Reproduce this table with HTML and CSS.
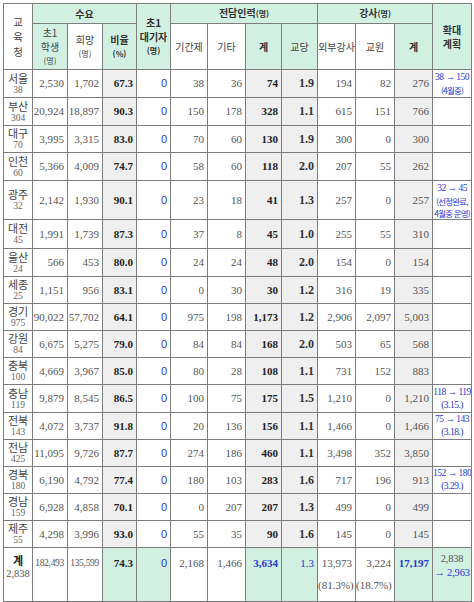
FILE: index.html
```html
<!DOCTYPE html>
<html lang="ko">
<head>
<meta charset="utf-8">
<link rel="stylesheet" href="styles.css">
</head>
<body>
<table class="t">
<colgroup>
<col class="w29"><col class="w35"><col class="w35"><col class="w34"><col class="w34"><col class="w37"><col class="w38"><col class="w36"><col class="w36"><col class="w38"><col class="w39"><col class="w38"><col class="w39">
</colgroup>
<thead>
<tr class="h1">
<th rowspan="2" class="wh region-h"><span class="ln">교</span><span class="ln">육</span><span class="ln">청</span></th>
<th colspan="3" class="gr b">수요</th>
<th rowspan="2" class="gr b"><span class="ln">초1</span><span class="ln">대기자</span><span class="ln u">(명)</span></th>
<th colspan="4" class="gr b">전담인력<span class="u">(명)</span></th>
<th colspan="3" class="gr b">강사<span class="u">(명)</span></th>
<th rowspan="2" class="gr b"><span class="ln">확대</span><span class="ln">계획</span></th>
</tr>
<tr class="h2">
<th class="gr"><span class="ln">초1</span><span class="ln">학생</span><span class="ln u">(명)</span></th>
<th class="wh"><span class="ln">희망</span><span class="ln u">(명)</span></th>
<th class="gr b"><span class="ln">비율</span><span class="ln u">(%)</span></th>
<th class="wh">기간제</th>
<th class="wh">기타</th>
<th class="gr b">계</th>
<th class="gr">교당</th>
<th class="wh">외부강사</th>
<th class="wh">교원</th>
<th class="gr b">계</th>
</tr>
</thead>
<tbody>
<tr class="r28"><td class="rg"><span class="rk">서울</span><span class="rn">38</span></td><td>2,530</td><td>1,702</td><td class="gy bd">67.3</td><td class="z">0</td><td>38</td><td>36</td><td class="gy bd">74</td><td class="gy bd2">1.9</td><td>194</td><td>82</td><td class="gy">276</td><td class="plan"><span class="pl">38 → 150</span><span class="pl k">(4월중)</span></td></tr>
<tr class="r28"><td class="rg"><span class="rk">부산</span><span class="rn">304</span></td><td>20,924</td><td>18,897</td><td class="gy bd">90.3</td><td class="z">0</td><td>150</td><td>178</td><td class="gy bd">328</td><td class="gy bd2">1.1</td><td>615</td><td>151</td><td class="gy">766</td><td></td></tr>
<tr class="r27"><td class="rg"><span class="rk">대구</span><span class="rn">70</span></td><td>3,995</td><td>3,315</td><td class="gy bd">83.0</td><td class="z">0</td><td>70</td><td>60</td><td class="gy bd">130</td><td class="gy bd2">1.9</td><td>300</td><td>0</td><td class="gy">300</td><td></td></tr>
<tr class="r28"><td class="rg"><span class="rk">인천</span><span class="rn">60</span></td><td>5,366</td><td>4,009</td><td class="gy bd">74.7</td><td class="z">0</td><td>58</td><td>60</td><td class="gy bd">118</td><td class="gy bd2">2.0</td><td>207</td><td>55</td><td class="gy">262</td><td></td></tr>
<tr class="r39"><td class="rg"><span class="rk">광주</span><span class="rn">32</span></td><td>2,142</td><td>1,930</td><td class="gy bd">90.1</td><td class="z">0</td><td>23</td><td>18</td><td class="gy bd">41</td><td class="gy bd2">1.3</td><td>257</td><td>0</td><td class="gy">257</td><td class="plan"><span class="pl">32 → 45</span><span class="pl k">(선정완료,</span><span class="pl k">4월중 운영)</span></td></tr>
<tr class="r29"><td class="rg"><span class="rk">대전</span><span class="rn">45</span></td><td>1,991</td><td>1,739</td><td class="gy bd">87.3</td><td class="z">0</td><td>37</td><td>8</td><td class="gy bd">45</td><td class="gy bd2">1.0</td><td>255</td><td>55</td><td class="gy">310</td><td></td></tr>
<tr class="r28"><td class="rg"><span class="rk">울산</span><span class="rn">24</span></td><td>566</td><td>453</td><td class="gy bd">80.0</td><td class="z">0</td><td>24</td><td>24</td><td class="gy bd">48</td><td class="gy bd2">2.0</td><td>154</td><td>0</td><td class="gy">154</td><td></td></tr>
<tr class="r27"><td class="rg"><span class="rk">세종</span><span class="rn">25</span></td><td>1,151</td><td>956</td><td class="gy bd">83.1</td><td class="z">0</td><td>0</td><td>30</td><td class="gy bd">30</td><td class="gy bd2">1.2</td><td>316</td><td>19</td><td class="gy">335</td><td></td></tr>
<tr class="r27"><td class="rg"><span class="rk">경기</span><span class="rn">975</span></td><td>90,022</td><td>57,702</td><td class="gy bd">64.1</td><td class="z">0</td><td>975</td><td>198</td><td class="gy bd">1,173</td><td class="gy bd2">1.2</td><td>2,906</td><td>2,097</td><td class="gy">5,003</td><td></td></tr>
<tr class="r27"><td class="rg"><span class="rk">강원</span><span class="rn">84</span></td><td>6,675</td><td>5,275</td><td class="gy bd">79.0</td><td class="z">0</td><td>84</td><td>84</td><td class="gy bd">168</td><td class="gy bd2">2.0</td><td>503</td><td>65</td><td class="gy">568</td><td></td></tr>
<tr class="r27"><td class="rg"><span class="rk">충북</span><span class="rn">100</span></td><td>4,669</td><td>3,967</td><td class="gy bd">85.0</td><td class="z">0</td><td>80</td><td>28</td><td class="gy bd">108</td><td class="gy bd2">1.1</td><td>731</td><td>152</td><td class="gy">883</td><td></td></tr>
<tr class="r28"><td class="rg"><span class="rk">충남</span><span class="rn">119</span></td><td>9,879</td><td>8,545</td><td class="gy bd">86.5</td><td class="z">0</td><td>100</td><td>75</td><td class="gy bd">175</td><td class="gy bd2">1.5</td><td>1,210</td><td>0</td><td class="gy">1,210</td><td class="plan"><span class="pl">118 → 119</span><span class="pl">(3.15.)</span></td></tr>
<tr class="r27"><td class="rg"><span class="rk">전북</span><span class="rn">143</span></td><td>4,072</td><td>3,737</td><td class="gy bd">91.8</td><td class="z">0</td><td>20</td><td>136</td><td class="gy bd">156</td><td class="gy bd2">1.1</td><td>1,466</td><td>0</td><td class="gy">1,466</td><td class="plan"><span class="pl">75 → 143</span><span class="pl">(3.18.)</span></td></tr>
<tr class="r27"><td class="rg"><span class="rk">전남</span><span class="rn">425</span></td><td>11,095</td><td>9,726</td><td class="gy bd">87.7</td><td class="z">0</td><td>274</td><td>186</td><td class="gy bd">460</td><td class="gy bd2">1.1</td><td>3,498</td><td>352</td><td class="gy">3,850</td><td></td></tr>
<tr class="r27"><td class="rg"><span class="rk">경북</span><span class="rn">180</span></td><td>6,190</td><td>4,792</td><td class="gy bd">77.4</td><td class="z">0</td><td>180</td><td>103</td><td class="gy bd">283</td><td class="gy bd2">1.6</td><td>717</td><td>196</td><td class="gy">913</td><td class="plan"><span class="pl">152 → 180</span><span class="pl">(3.29.)</span></td></tr>
<tr class="r27"><td class="rg"><span class="rk">경남</span><span class="rn">159</span></td><td>6,928</td><td>4,858</td><td class="gy bd">70.1</td><td class="z">0</td><td>0</td><td>207</td><td class="gy bd">207</td><td class="gy bd2">1.3</td><td>499</td><td>0</td><td class="gy">499</td><td></td></tr>
<tr class="r27"><td class="rg"><span class="rk">제주</span><span class="rn">55</span></td><td>4,298</td><td>3,996</td><td class="gy bd">93.0</td><td class="z">0</td><td>55</td><td>35</td><td class="gy bd">90</td><td class="gy bd2">1.6</td><td>145</td><td>0</td><td class="gy">145</td><td></td></tr>
<tr class="tot"><td class="rg"><span class="rk tk">계</span><span class="rn tn">2,838</span></td><td class="sm">182,493</td><td class="sm">135,599</td><td class="gr bd">74.3</td><td class="gr z">0</td><td>2,168</td><td>1,466</td><td class="gr bd blue">3,634</td><td class="gr blue">1.3</td><td class="two"><span class="tl">13,973</span><span class="tl">(81.3%)</span></td><td class="two"><span class="tl">3,224</span><span class="tl">(18.7%)</span></td><td class="gr bd blue">17,197</td><td class="gr tplan"><span class="pl gt">2,838</span><span class="pl">→ 2,963</span></td></tr>
</tbody>
</table>
</body>
</html>
```

FILE: styles.css
```css
body {
  margin: 0;
  padding: 3px;
  background: #fff;
}
.t {
  border-collapse: collapse;
  table-layout: fixed;
  width: 469px;
  font-family: "Liberation Serif", "Noto Sans CJK KR", serif;
  font-size: 11px;
  color: #555;
  border: 1px solid #8a8a8a;
}
.w29 { width: 29px; }
.w34 { width: 34px; }
.w35 { width: 35px; }
.w36 { width: 36px; }
.w37 { width: 37px; }
.w38 { width: 38px; }
.w39 { width: 39px; }
.t th, .t td {
  border: 1px solid #7d7d7d;
  padding: 0 3px 0 0;
  overflow: hidden;
  white-space: nowrap;
}
.t th {
  font-family: "Noto Sans CJK KR", sans-serif;
  font-weight: 400;
  font-size: 10px;
  line-height: 14px;
  color: #444;
  text-align: center;
  padding: 0;
}
.t th .ln { display: block; line-height: 14px; }
.t th.b { font-weight: 700; color: #333; }
.t th .u { font-size: 8px; font-weight: 400; }
.t th.b .u { font-weight: 700; }
.h1 { height: 20px; }
.h2 { height: 46px; }
.t th.region-h { font-size: 10.5px; color: #444; }
.t th.region-h .ln { line-height: 15px; }
.gr { background: #d1f0e1; }
.wh { background: #fff; }
.gy { background: #efefef; }
.t td { text-align: right; line-height: 13px; }
.r27 { height: 27px; }
.r28 { height: 28px; }
.r29 { height: 29px; }
.r39 { height: 39px; }
.tot { height: 52px; }
.t td.rg {
  text-align: center;
  padding: 0;
  line-height: 12px;
}
.rk {
  display: block;
  font-family: "Noto Sans CJK KR", sans-serif;
  font-size: 11px;
  line-height: 13px;
  color: #444;
}
.rn {
  display: block;
  font-family: "Liberation Serif", serif;
  font-size: 9.5px;
  line-height: 11px;
  color: #666;
}
.bd { font-weight: 700; color: #222; }
.bd2 { font-weight: 700; color: #333; font-size: 12px; }
.z { color: #2b36d8; font-family: "Liberation Sans", sans-serif; }
.blue { color: #2b36d8; }
.t td.plan {
  text-align: center;
  padding: 0;
  color: #2b36d8;
}
.pl {
  display: block;
  font-family: "Liberation Serif", serif;
  font-size: 9.5px;
  line-height: 13px;
  letter-spacing: -0.5px;
}
.pl.k {
  font-family: "Noto Sans CJK KR", sans-serif;
  font-size: 8.5px;
  line-height: 12px;
  letter-spacing: -0.8px;
}
.sm { font-size: 9.5px; letter-spacing: -0.3px; }
.tot td { vertical-align: top; padding-top: 9px; }
.t .tot td.rg { padding-top: 5px; }
.rk.tk { font-weight: 700; color: #222; line-height: 14px; }
.rn.tn { font-size: 10.5px; line-height: 13px; color: #555; }
.t .tot td.two { padding-top: 9px; }
.tl { display: block; line-height: 22px; height: 22px; }
.t .tot td.two .tl { line-height: 13px; height: 22px; }
.t .tot td.tplan {
  padding: 4px 0 0;
  text-align: center;
  color: #2b36d8;
}
.t .tot td.tplan .pl { font-size: 10.5px; line-height: 14px; letter-spacing: -0.2px; }
.gt { color: #555; }
```
